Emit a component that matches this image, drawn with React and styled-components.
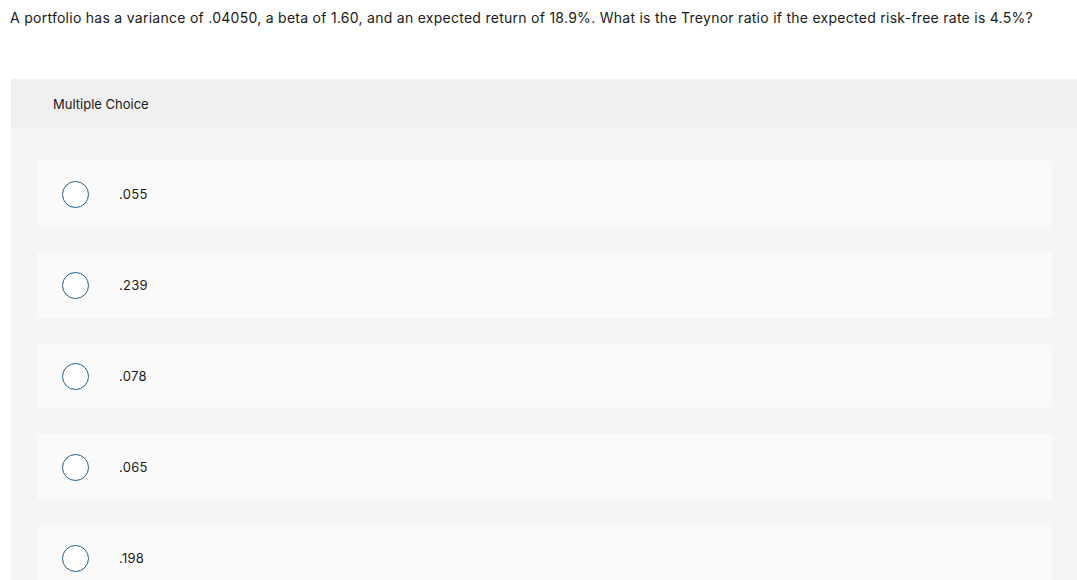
import React from 'react';
import styled, { createGlobalStyle } from 'styled-components';

const GlobalStyle = createGlobalStyle`
  html, body {
    margin: 0;
    padding: 0;
    background: #ffffff;
    font-family: "Inter", "Lato", sans-serif;
    color: #1a1a1a;
  }
`;

const Page = styled.div`
  width: 1077px;
  height: 580px;
  overflow: hidden;
`;

const Question = styled.p`
  margin: 0;
  padding: 9px 0 0 10px;
  font-size: 14px;
  line-height: 18px;
  letter-spacing: 0.27px;
  height: 79px;
  box-sizing: border-box;
`;

const Panel = styled.div`
  margin-left: 11px;
  background: #f5f5f5;
`;

const PanelHeader = styled.div`
  height: 50px;
  display: flex;
  align-items: center;
  padding-left: 42px;
  background: #f0f0f0;
  font-size: 13px;
`;

const Options = styled.div`
  display: flex;
  flex-direction: column;
  gap: 25px;
  padding: 32px 25px 0 26px;
`;

const Option = styled.div`
  height: 66px;
  display: flex;
  align-items: center;
  background: #fafafa;
  border-radius: 4px;
`;

const Radio = styled.span`
  width: 25px;
  height: 25px;
  border: 1.5px solid #1f5c8f;
  border-radius: 50%;
  background: #ffffff;
  margin-left: 25px;
  flex-shrink: 0;
`;

const Label = styled.span`
  margin-left: 30px;
  font-size: 13px;
  letter-spacing: 0.3px;
`;

const choices = ['.055', '.239', '.078', '.065', '.198'];

const App = () => {
  return (
    <Page>
      <GlobalStyle />
      <Question>
        A portfolio has a variance of .04050, a beta of 1.60, and an expected return of 18.9%. What is the Treynor ratio if the expected risk-free rate is 4.5%?
      </Question>
      <Panel>
        <PanelHeader>Multiple Choice</PanelHeader>
        <Options>
          {choices.map((c, i) => (
            <Option key={i}>
              <Radio />
              <Label>{c}</Label>
            </Option>
          ))}
        </Options>
      </Panel>
    </Page>
  );
};

export default App;
